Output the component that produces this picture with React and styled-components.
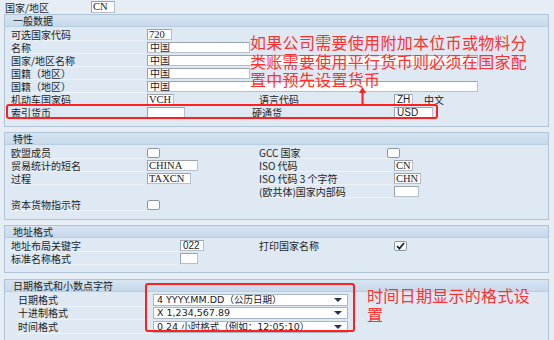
import styled, { createGlobalStyle } from "styled-components";

const GlobalStyle = createGlobalStyle`
  body {
    margin: 0;
    background: #e6edf4;
    font-family: "Noto Sans CJK SC", "Liberation Sans", sans-serif;
    color: #1e1e1e;
  }
`;

const Page = styled.div`
  position: relative;
  width: 554px;
  height: 340px;
  overflow: hidden;
  background: #e6edf4;
`;

const TopRow = styled.div`
  display: flex;
  align-items: center;
  height: 14px;
  padding-left: 5px;
`;

const Label = styled.div`
  display: flex;
  align-items: center;
  height: 100%;
  box-sizing: border-box;
  font-size: 10px;
  line-height: 11px;
  white-space: nowrap;
  margin-left: ${(p) => p.shift || 0}px;
  border-bottom: ${(p) => (p.plain ? "none" : "1px solid #eef3f8")};
  margin-right: 2px;
`;

const TopLabel = styled(Label)`
  width: 84px;
  border-bottom: none;
`;

const Field = styled.div`
  box-sizing: border-box;
  width: ${(p) => p.w}px;
  height: ${(p) => p.h || 11}px;
  background: #fff;
  border: 1px solid #b7c0ca;
  border-top-color: #9aa4ae;
  border-left-color: #9aa4ae;
  font-family: ${(p) =>
    p.serif
      ? '"Liberation Serif", serif'
      : '"Liberation Sans", "Noto Sans CJK SC", sans-serif'};
  font-size: ${(p) => (p.serif ? 10.5 : 10)}px;
  line-height: ${(p) => (p.h || 11) - 2}px;
  padding-left: ${(p) => (p.serif ? 1 : 2)}px;
  color: #1a1a2a;
  white-space: nowrap;
  overflow: hidden;
  grid-column: ${(p) => (p.span ? `span ${p.span}` : "auto")};
`;

const Group = styled.section`
  margin: ${(p) => p.top || 0}px 5px 0 4px;
  border: 1px solid #b0c4d8;
  background: #dfe9f3;
`;

const GroupHeader = styled.div`
  height: 11px;
  line-height: 11px;
  padding-left: 8px;
  font-size: 10px;
  background: linear-gradient(#d6e4f1, #c6d9ec);
  border-bottom: 1px solid #b9cde0;
`;

const Grid = styled.div`
  display: grid;
  grid-template-columns: ${(p) => p.cols};
  grid-auto-rows: ${(p) => p.rowH || 13}px;
  align-items: center;
  padding: 1px 0 ${(p) => p.bottom || 7}px ${(p) => p.left || 6}px;
`;

const Inline = styled.div`
  display: flex;
  align-items: center;
  gap: 11px;
  font-size: 10px;
  line-height: 11px;
`;

const Check = styled.div`
  box-sizing: border-box;
  width: 13px;
  height: 10px;
  margin-left: ${(p) => p.shift || 0}px;
  background: #fff;
  border: 1px solid #8c96a2;
  border-radius: 2px;
  display: flex;
  align-items: center;
  justify-content: center;
`;

const Select = styled.div`
  box-sizing: border-box;
  width: 195px;
  height: 12px;
  background: #fff;
  border: 1px solid #a9b6c4;
  display: flex;
  align-items: center;
  justify-content: space-between;
  padding: 0 5px 0 3px;
  font-family: "DejaVu Sans", "Noto Sans CJK SC", sans-serif;
  font-size: 9.5px;
  line-height: 10px;
  color: #1a1a2a;
  white-space: nowrap;
`;

const Caret = styled.span`
  width: 0;
  height: 0;
  border-left: 4px solid transparent;
  border-right: 4px solid transparent;
  border-top: 4px solid #243452;
`;

const Note = styled.div`
  position: absolute;
  left: ${(p) => p.x}px;
  top: ${(p) => p.y}px;
  width: ${(p) => p.w}px;
  color: #ff3030;
  font-size: 16px;
  line-height: ${(p) => p.lh}px;
  letter-spacing: 0.3px;
`;

const RedBox = styled.div`
  position: absolute;
  left: ${(p) => p.x}px;
  top: ${(p) => p.y}px;
  width: ${(p) => p.w}px;
  height: ${(p) => p.h}px;
  box-sizing: border-box;
  border: 2px solid #ff1f1f;
  border-radius: 3px;
`;

const Arrow = styled.svg`
  position: absolute;
  left: 358px;
  top: 87px;
`;

const Spacer = styled.div``;

function Dropdown({ children }) {
  return (
    <Select>
      <span>{children}</span>
      <Caret />
    </Select>
  );
}

export default function App() {
  return (
    <Page>
      <GlobalStyle />
      <TopRow>
        <TopLabel>国家/地区</TopLabel>
        <Field w={24} h={12} serif>
          CN
        </Field>
      </TopRow>

      <Group>
        <GroupHeader>一般数据</GroupHeader>
        <Grid cols="136px 112px 135px auto" rowH={13}>
          <Label>可选国家代码</Label>
          <Field w={25} serif>720</Field>
          <Spacer />
          <Spacer />
          <Label>名称</Label>
          <Field w={103} span={3}>中国</Field>
          <Label>国家/地区名称</Label>
          <Field w={331} span={3}>中国</Field>
          <Label>国籍（地区）</Label>
          <Field w={103} span={3}>中国</Field>
          <Label>国籍（地区）</Label>
          <Field w={331} span={3}>中国</Field>
          <Label>机动车国家码</Label>
          <Field w={27} serif>VCH</Field>
          <Label>语言代码</Label>
          <Inline>
            <Field w={19}>ZH</Field>
            <span>中文</span>
          </Inline>
          <Label>索引货币</Label>
          <Field w={38} />
          <Label shift={-7}>硬通货</Label>
          <Field w={39}>USD</Field>
        </Grid>
      </Group>

      <Group top={5}>
        <GroupHeader>特性</GroupHeader>
        <Grid cols="136px 112px 135px auto" rowH={13} bottom={8}>
          <Label>欧盟成员</Label>
          <Check />
          <Label>GCC 国家</Label>
          <Check shift={-7} />
          <Label>贸易统计的短名</Label>
          <Field w={51} serif>CHINA</Field>
          <Label>ISO 代码</Label>
          <Field w={19} serif>CN</Field>
          <Label>过程</Label>
          <Field w={44} serif>TAXCN</Field>
          <Label>ISO 代码 3 个字符</Label>
          <Field w={27} serif>CHN</Field>
          <Label plain />
          <Spacer />
          <Label>(欧共体)国家内部码</Label>
          <Field w={25} />
          <Label>资本货物指示符</Label>
          <Check />
          <Spacer />
          <Spacer />
        </Grid>
      </Group>

      <Group top={5}>
        <GroupHeader>地址格式</GroupHeader>
        <Grid cols="169px 79px 135px auto" rowH={13} bottom={7}>
          <Label>地址布局关键字</Label>
          <Field w={24}>022</Field>
          <Label plain>打印国家名称</Label>
          <Check>
            <svg width="9" height="8" viewBox="0 0 9 8">
              <path
                d="M1 4.2 L3.4 6.6 L8 1"
                fill="none"
                stroke="#1b2433"
                strokeWidth="1.8"
              />
            </svg>
          </Check>
          <Label>标准名称格式</Label>
          <Field w={18} />
          <Spacer />
          <Spacer />
        </Grid>
      </Group>

      <Group top={6}>
        <GroupHeader>日期格式和小数点字符</GroupHeader>
        <Grid cols="135px auto" rowH={13.5} left={13} bottom={7}>
          <Label>日期格式</Label>
          <Dropdown>4 YYYY.MM.DD（公历日期）</Dropdown>
          <Label>十进制格式</Label>
          <Dropdown>X 1,234,567.89</Dropdown>
          <Label>时间格式</Label>
          <Dropdown>0 24 小时格式（例如：12:05:10）</Dropdown>
        </Grid>
      </Group>

      <Note x={250} y={33} w={290} lh={18.5}>
        如果公司需要使用附加本位币或物料分类账需要使用平行货币则必须在国家配置中预先设置货币
      </Note>
      <Note x={367} y={286} w={170} lh={19}>
        时间日期显示的格式设置
      </Note>
      <RedBox x={6} y={104} w={432} h={15} />
      <RedBox x={145} y={283} w={210} h={49} />
      <Arrow width="9" height="18" viewBox="0 0 9 18">
        <path d="M4.5 0 L8 6 L1 6 Z" fill="#ff1f1f" />
        <line x1="4.5" y1="5" x2="4.5" y2="18" stroke="#ff1f1f" strokeWidth="2" />
      </Arrow>
    </Page>
  );
}
